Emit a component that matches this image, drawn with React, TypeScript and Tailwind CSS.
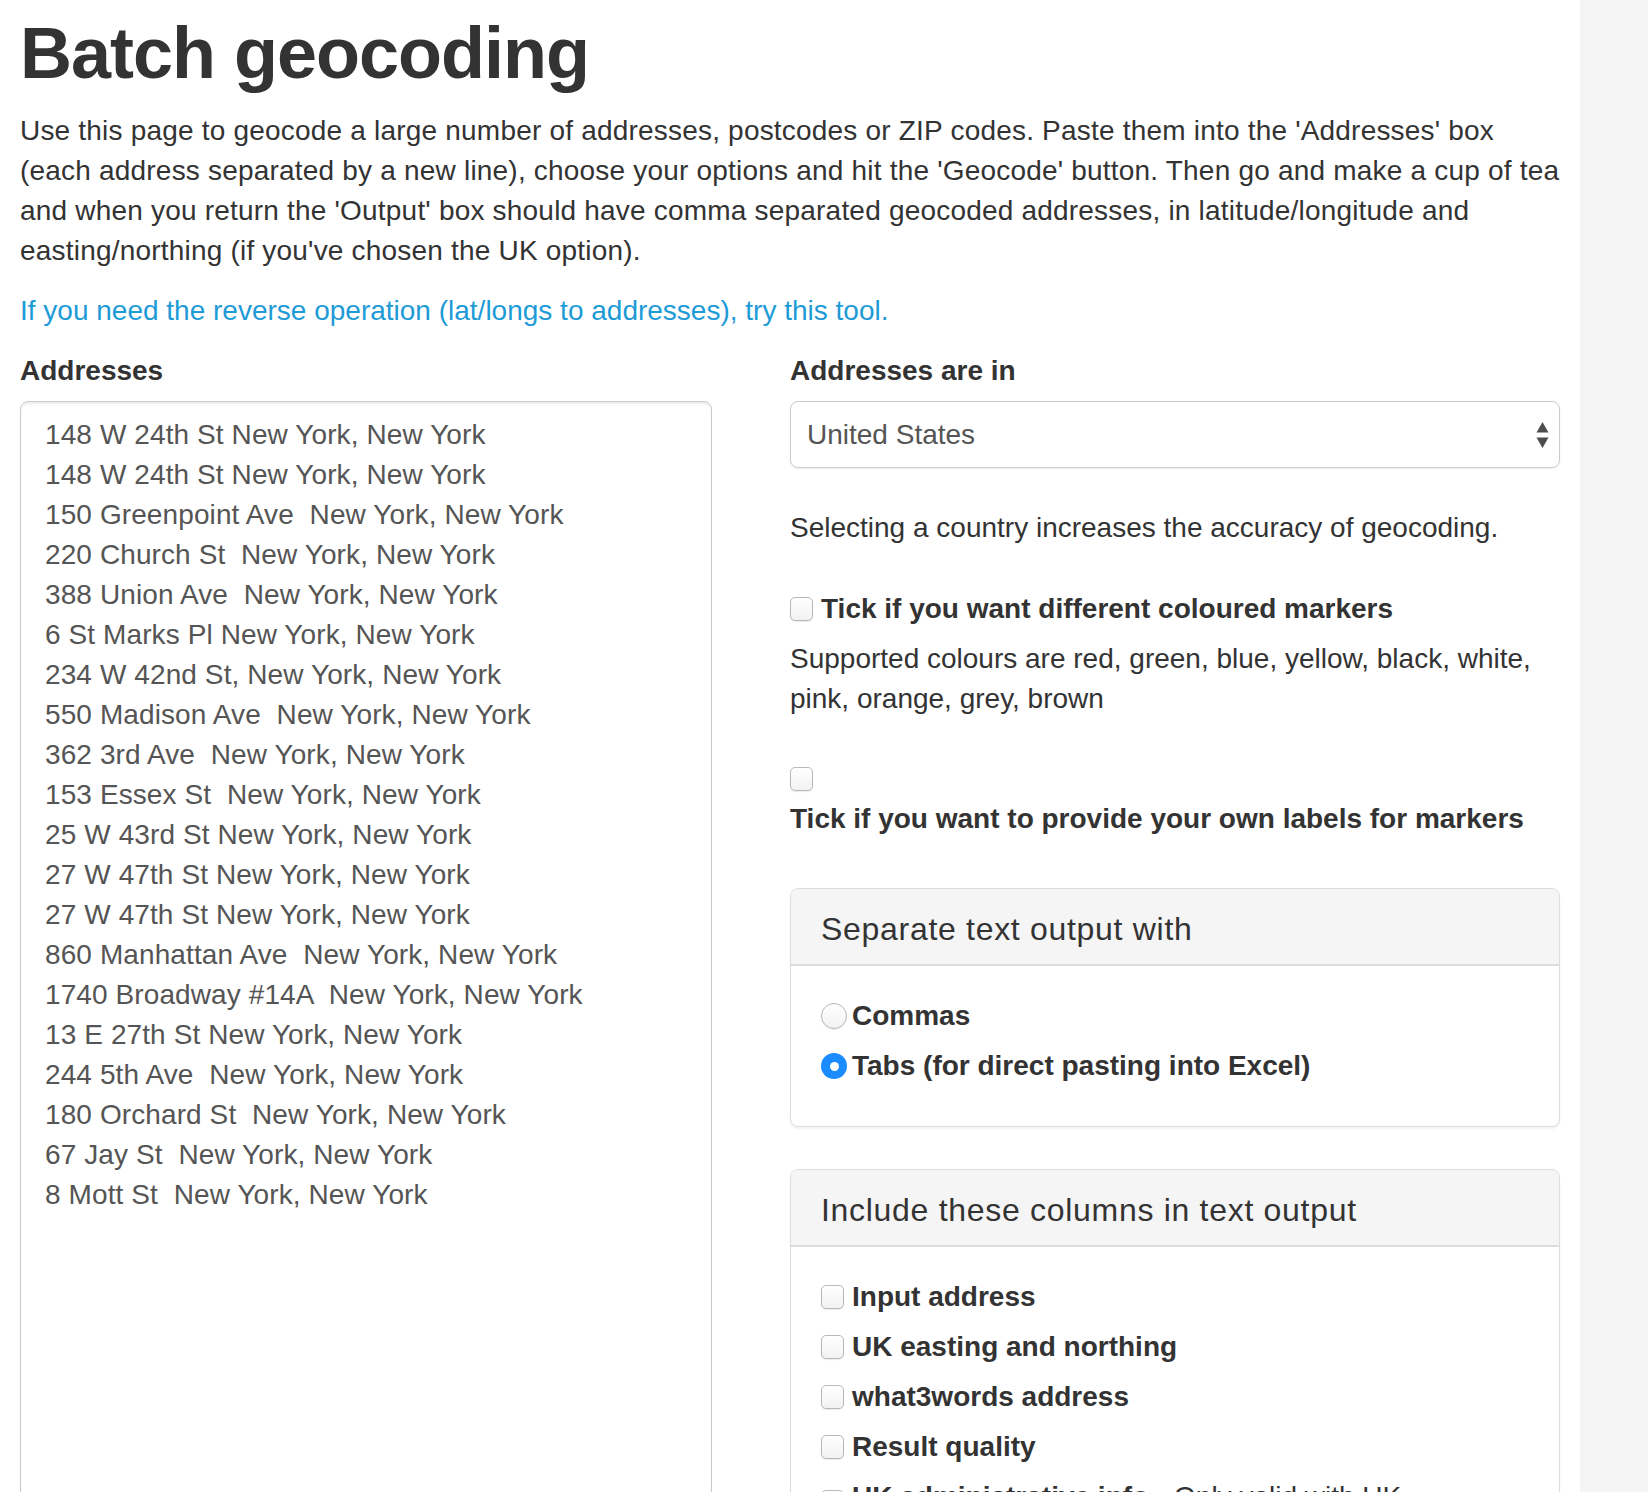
import React from "react";

const addresses = [
  "148 W 24th St New York, New York",
  "148 W 24th St New York, New York",
  "150 Greenpoint Ave  New York, New York",
  "220 Church St  New York, New York",
  "388 Union Ave  New York, New York",
  "6 St Marks Pl New York, New York",
  "234 W 42nd St, New York, New York",
  "550 Madison Ave  New York, New York",
  "362 3rd Ave  New York, New York",
  "153 Essex St  New York, New York",
  "25 W 43rd St New York, New York",
  "27 W 47th St New York, New York",
  "27 W 47th St New York, New York",
  "860 Manhattan Ave  New York, New York",
  "1740 Broadway #14A  New York, New York",
  "13 E 27th St New York, New York",
  "244 5th Ave  New York, New York",
  "180 Orchard St  New York, New York",
  "67 Jay St  New York, New York",
  "8 Mott St  New York, New York",
].join("\n");

const columns = [
  "Input address",
  "UK easting and northing",
  "what3words address",
  "Result quality",
];

// native-looking mac checkbox
function Box() {
  return (
    <span className="inline-block h-[24px] w-[23px] shrink-0 rounded-[5px] border border-[#b8b8b8] bg-linear-to-b from-white to-[#f2f2f2] shadow-[0_1px_1px_rgba(0,0,0,0.08)]" />
  );
}

function Radio({ checked }: { checked?: boolean }) {
  if (checked) {
    return (
      <span className="flex h-[26px] w-[26px] shrink-0 items-center justify-center rounded-full bg-[#1a8cff]">
        <span className="h-[9px] w-[9px] rounded-full bg-white" />
      </span>
    );
  }
  return (
    <span className="inline-block h-[26px] w-[26px] shrink-0 rounded-full border border-[#b8b8b8] bg-linear-to-b from-white to-[#f2f2f2] shadow-[0_1px_1px_rgba(0,0,0,0.08)]" />
  );
}

function SelectArrows() {
  return (
    <svg width="13" height="26" viewBox="0 0 13 26" className="shrink-0">
      <polygon points="6.5,0 12.5,10.5 0.5,10.5" fill="#4d4d4d" />
      <polygon points="0.5,15.5 12.5,15.5 6.5,26" fill="#4d4d4d" />
    </svg>
  );
}

function Panel({ title, children }: { title: string; children: React.ReactNode }) {
  return (
    <div className="rounded-[8px] border border-[#ddd] bg-white shadow-[0_2px_2px_rgba(0,0,0,0.05)]">
      <div className="rounded-t-[7px] border-b-2 border-[#ddd] bg-[#f5f5f5] px-[30px] pt-[23px] pb-[17px]">
        <h3 className="text-[32px] leading-[35px] tracking-[0.7px]">{title}</h3>
      </div>
      <div className="flex flex-col gap-[10px] px-[30px] pt-[30px] pb-[40px]">{children}</div>
    </div>
  );
}

export default function App() {
  return (
    <div className="flex h-[1492px] overflow-hidden bg-[#f5f5f5] font-['Liberation_Sans',Arial,sans-serif] text-[28px] leading-[40px] text-[#333]">
      <main className="w-[1580px] shrink-0 bg-white px-[20px]">
        <h1 className="mt-[14px] mb-[18px] text-[72px] leading-[79px] font-bold tracking-[-1px]">Batch geocoding</h1>
        <p className="tracking-[0.2px]">
          Use this page to geocode a large number of addresses, postcodes or ZIP codes. Paste them into the 'Addresses' box
          <br />
          (each address separated by a new line), choose your options and hit the 'Geocode' button. Then go and make a cup of tea
          <br />
          and when you return the 'Output' box should have comma separated geocoded addresses, in latitude/longitude and
          <br />
          easting/northing (if you've chosen the UK option).
        </p>
        <p className="mt-[20px]">
          <a href="#" className="text-[#1e9bd7]">
            If you need the reverse operation (lat/longs to addresses), try this tool.
          </a>
        </p>

        <div className="mt-[20px] flex gap-[78px]">
          {/* input column */}
          <div className="w-[692px] shrink-0">
            <label className="mb-[10px] block font-bold">Addresses</label>
            <textarea
              readOnly
              defaultValue={addresses}
              className="block h-[1200px] w-full resize-none rounded-[8px] border border-[#ccc] px-[24px] pt-[13px] pb-[12px] leading-[40px] tracking-[0.1px] text-[#555] shadow-[inset_0_2px_2px_rgba(0,0,0,0.075)] outline-none"
            />
          </div>

          {/* options column */}
          <div className="flex-1">
            <label className="mb-[10px] block font-bold">Addresses are in</label>
            <div className="flex h-[67px] items-center justify-between rounded-[8px] border border-[#ccc] pr-[10px] pl-[16px] text-[#555] shadow-[0_1px_2px_rgba(0,0,0,0.08)]">
              <span>United States</span>
              <SelectArrows />
            </div>

            <p className="mt-[40px]">Selecting a country increases the accuracy of geocoding.</p>

            <label className="mt-[41px] flex items-center gap-[8px] font-bold">
              <Box />
              Tick if you want different coloured markers
            </label>
            <p className="mt-[10px]">
              Supported colours are red, green, blue, yellow, black, white,
              <br />
              pink, orange, grey, brown
            </p>

            <div className="mt-[40px] flex h-[40px] items-center">
              <Box />
            </div>
            <p className="font-bold">Tick if you want to provide your own labels for markers</p>

            <div className="mt-[49px]">
              <Panel title="Separate text output with">
                <label className="flex items-center gap-[5px] font-bold">
                  <Radio />
                  Commas
                </label>
                <label className="flex items-center gap-[5px] font-bold">
                  <Radio checked />
                  Tabs (for direct pasting into Excel)
                </label>
              </Panel>
            </div>

            <div className="mt-[42px]">
              <Panel title="Include these columns in text output">
                {columns.map((c) => (
                  <label key={c} className="flex items-center gap-[8px] font-bold">
                    <Box />
                    {c}
                  </label>
                ))}
                <label className="flex items-start gap-[8px] font-bold">
                  <span className="mt-[8px]">
                    <Box />
                  </span>
                  <span>
                    UK administrative info <span className="font-normal">- Only valid with UK</span>
                    <br />
                    <span className="font-normal">postcodes</span>
                  </span>
                </label>
              </Panel>
            </div>
          </div>
        </div>
      </main>
      <div className="flex-1" />
    </div>
  );
}
